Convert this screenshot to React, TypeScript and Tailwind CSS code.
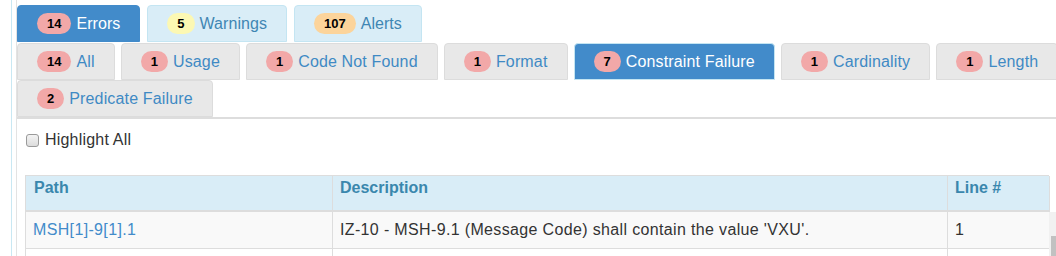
import React from 'react';

type Tab = { label: string; count: number; badge: string; active?: boolean };

const topTabs: Tab[] = [
  { label: 'Errors', count: 14, badge: 'bg-[#f2a8a8]', active: true },
  { label: 'Warnings', count: 5, badge: 'bg-[#fcf8b3]' },
  { label: 'Alerts', count: 107, badge: 'bg-[#fcd49b]' },
];

const subTabs: Tab[] = [
  { label: 'All', count: 14, badge: 'bg-[#f2a8a8]' },
  { label: 'Usage', count: 1, badge: 'bg-[#f2a8a8]' },
  { label: 'Code Not Found', count: 1, badge: 'bg-[#f2a8a8]' },
  { label: 'Format', count: 1, badge: 'bg-[#f2a8a8]' },
  { label: 'Constraint Failure', count: 7, badge: 'bg-[#f2a8a8]', active: true },
  { label: 'Cardinality', count: 1, badge: 'bg-[#f2a8a8]' },
  { label: 'Length', count: 1, badge: 'bg-[#f2a8a8]' },
  { label: 'Predicate Failure', count: 2, badge: 'bg-[#f2a8a8]' },
];

const Badge = ({ count, color }: { count: number; color: string }) => (
  <span className={`${color} flex h-[21px] items-center rounded-full px-[10px] text-[13px] font-bold leading-none text-black`}>
    {count}
  </span>
);

const App: React.FC = () => {
  return (
    <div className="h-[256px] w-[1056px] overflow-hidden bg-white font-['Liberation_Sans',Arial,sans-serif] text-[16px] text-[#333]">
      <div className="ml-[11px] h-full border-l border-[#c9e8f3] pl-[4px]">
        <div className="h-full w-[1100px] border-l border-[#e3e3e3]">
          {/* top level tabs */}
          <div className="flex gap-[7px] pt-[5px]">
            {topTabs.map((t) => (
              <div
                key={t.label}
                className={`flex h-[37px] items-center gap-[5px] rounded-t-[4px] border px-[19px] ${
                  t.active
                    ? 'border-[#428bca] bg-[#428bca] text-white'
                    : 'border-[#c4e5f2] bg-[#d9edf7] text-[#3f86b3]'
                }`}
              >
                <Badge count={t.count} color={t.badge} />
                <span className="tracking-[0.05px]">{t.label}</span>
              </div>
            ))}
          </div>

          {/* sub tabs */}
          <div className="mt-px flex flex-wrap gap-x-[6px] border-b-2 border-[#dddddd]">
            {subTabs.map((t) => (
              <div
                key={t.label}
                className={`flex h-[37px] items-center gap-[5px] rounded-t-[4px] border px-[19px] ${
                  t.active
                    ? 'border-[#c4e5f2] bg-[#428bca] text-white'
                    : 'border-[#dcdcdc] bg-[#e8e8e8] text-[#3f8ac4]'
                }`}
              >
                <Badge count={t.count} color={t.badge} />
                <span className="tracking-[0.15px]">{t.label}</span>
              </div>
            ))}
          </div>

          <div className="pl-2">
            <label className="mt-[10px] flex h-[22px] items-center gap-[6px] tracking-[0.2px]">
              <span className="ml-px h-[13px] w-[13px] rounded-[3px] border border-[#9a9a9a] bg-gradient-to-b from-[#f4f4f4] to-[#dcdcdc]" />
              <span>Highlight All</span>
            </label>

            {/* table */}
            <div className="mt-[24px] w-[1041px]">
              <div className="grid w-[1024px] grid-cols-[307px_615px_102px] border-t border-l border-[#dddddd] bg-[#d9edf7] font-bold text-[#3a87ad]">
                <div className="h-[36px] border-r border-b-2 border-[#dddddd] px-2 pt-px leading-[22px]">Path</div>
                <div className="h-[36px] border-r border-b-2 border-[#dddddd] px-[7px] pt-px leading-[22px]">Description</div>
                <div className="h-[36px] border-r border-b-2 border-[#dddddd] px-[7px] pt-px leading-[22px]">Line #</div>
              </div>
              <div className="flex">
                <div className="w-[1024px] border-l border-[#dddddd] tracking-[0.35px]">
                  <div className="grid grid-cols-[307px_615px_102px] bg-[#f9f9f9]">
                    <div className="flex h-[37px] items-center border-r border-b border-[#dddddd] px-[7px] text-[#428bca]">MSH[1]-9[1].1</div>
                    <div className="flex h-[37px] items-center border-r border-b border-[#dddddd] px-[7px]">
                      IZ-10 - MSH-9.1 (Message Code) shall contain the value 'VXU'.
                    </div>
                    <div className="flex h-[37px] items-center border-r border-b border-[#dddddd] px-[7px]">1</div>
                  </div>
                  <div className="grid grid-cols-[307px_615px_102px] bg-white">
                    <div className="h-[37px] border-r border-b border-[#dddddd]" />
                    <div className="h-[37px] border-r border-b border-[#dddddd]" />
                    <div className="h-[37px] border-r border-b border-[#dddddd]" />
                  </div>
                </div>
                <div className="w-[17px] bg-[#f1f1f1] pt-[24px] pl-[2px]">
                  <div className="h-[60px] w-[13px] bg-[#c1c1c1]" />
                </div>
              </div>
            </div>
          </div>
        </div>
      </div>
    </div>
  );
};

export default App;
